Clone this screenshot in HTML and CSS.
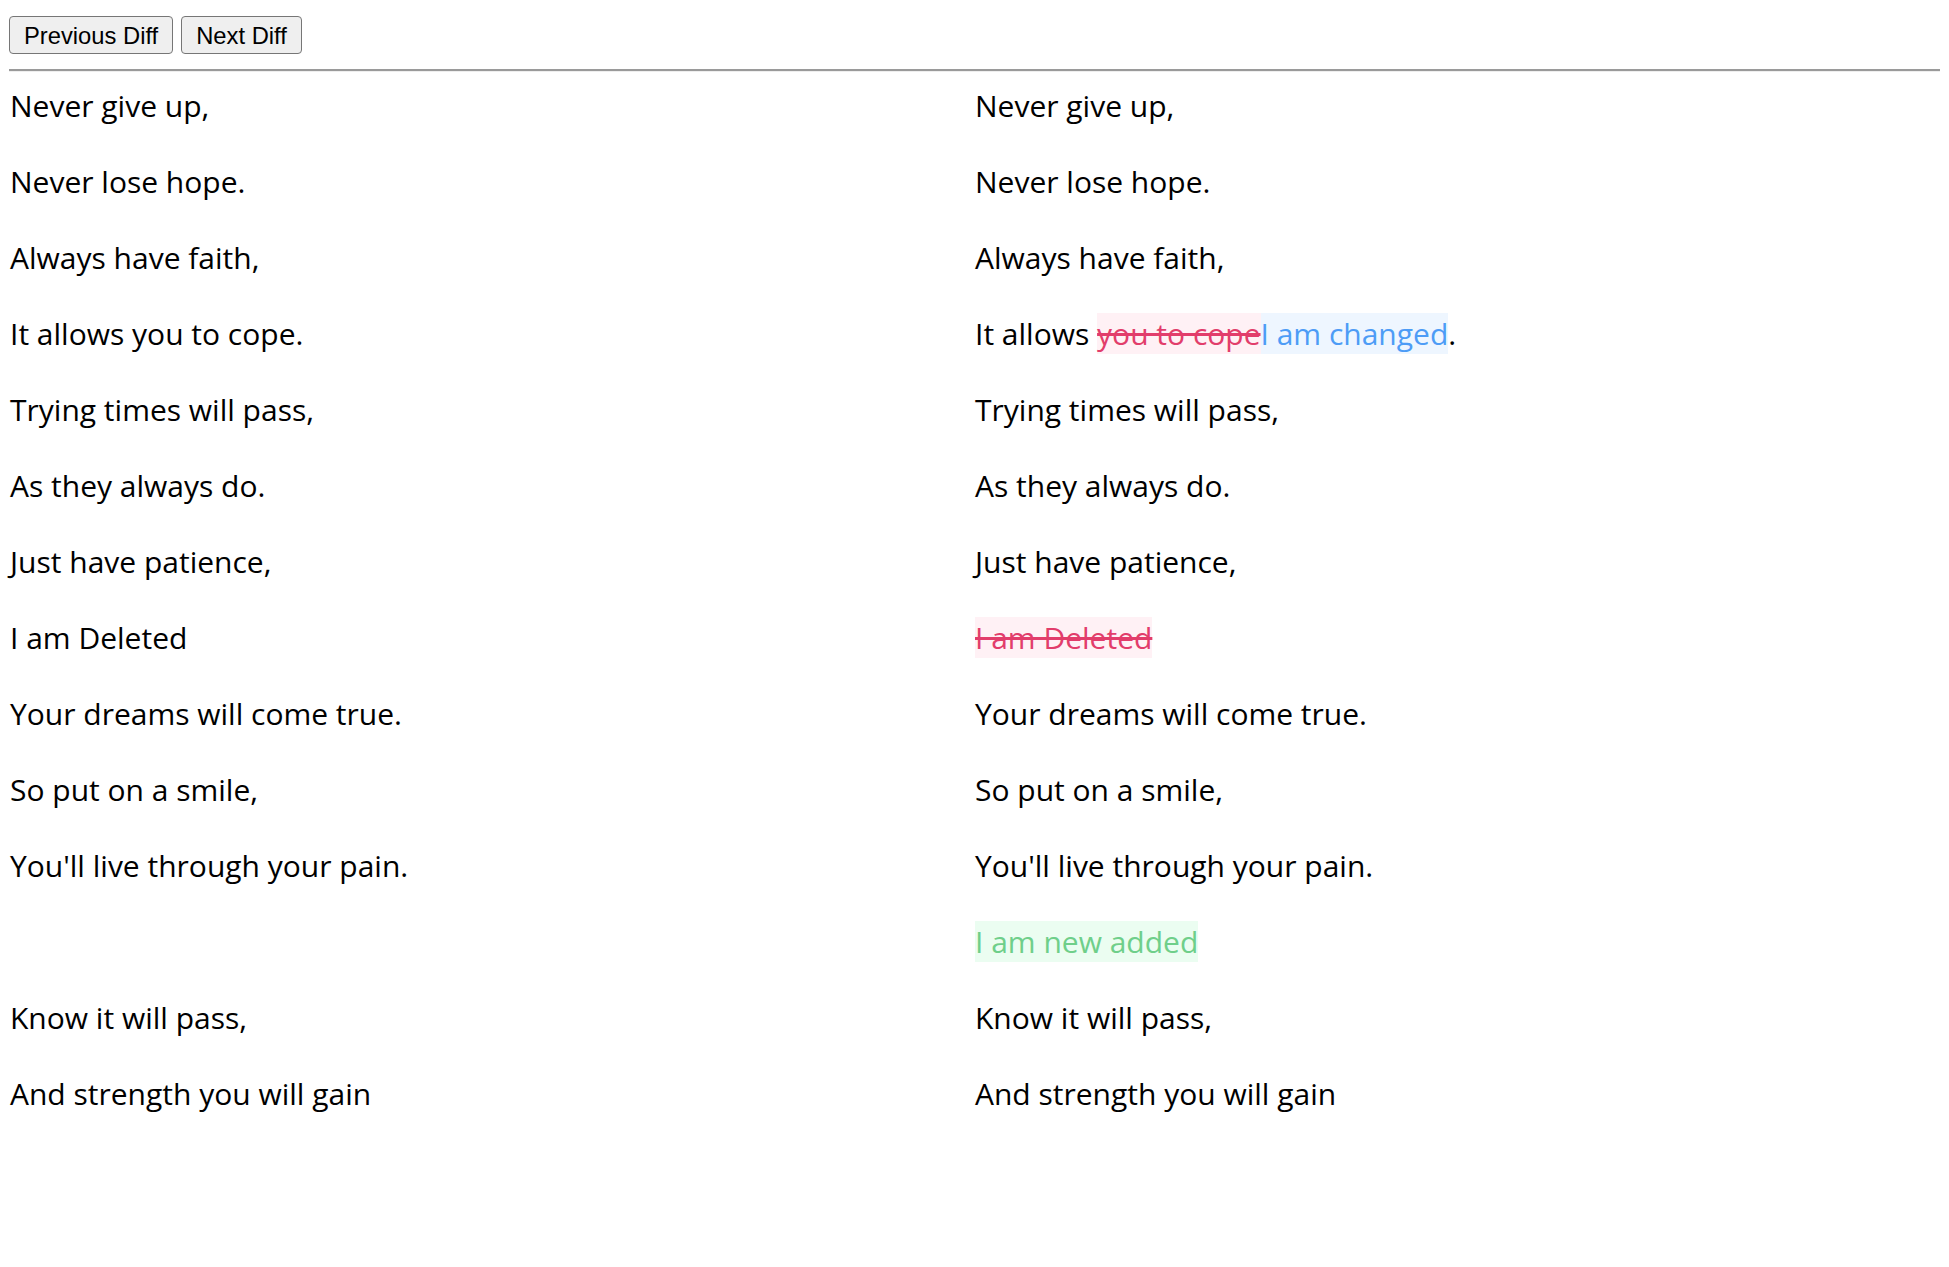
FILE: index.html
```html
<!DOCTYPE html>
<html>
<head>
<meta charset="utf-8">
<link rel="stylesheet" href="styles.css">
</head>
<body>
<div class="toolbar">
  <button class="btn">Previous Diff</button>
  <button class="btn">Next Diff</button>
</div>
<hr class="rule">
<div class="diff">
  <div class="line">Never give up,</div>
  <div class="line">Never give up,</div>
  <div class="line">Never lose hope.</div>
  <div class="line">Never lose hope.</div>
  <div class="line">Always have faith,</div>
  <div class="line">Always have faith,</div>
  <div class="line">It allows you to cope.</div>
  <div class="line">It allows <span class="del">you to cope</span><span class="chg">I am changed</span>.</div>
  <div class="line">Trying times will pass,</div>
  <div class="line">Trying times will pass,</div>
  <div class="line">As they always do.</div>
  <div class="line">As they always do.</div>
  <div class="line">Just have patience,</div>
  <div class="line">Just have patience,</div>
  <div class="line">I am Deleted</div>
  <div class="line"><span class="del">I am Deleted</span></div>
  <div class="line">Your dreams will come true.</div>
  <div class="line">Your dreams will come true.</div>
  <div class="line">So put on a smile,</div>
  <div class="line">So put on a smile,</div>
  <div class="line">You'll live through your pain.</div>
  <div class="line">You'll live through your pain.</div>
  <div class="line"></div>
  <div class="line"><span class="add">I am new added</span></div>
  <div class="line">Know it will pass,</div>
  <div class="line">Know it will pass,</div>
  <div class="line">And strength you will gain</div>
  <div class="line">And strength you will gain</div>
</div>
</body>
</html>
```

FILE: styles.css
```css
html, body {
  margin: 0;
  background: #ffffff;
}
body {
  padding: 16px 9px 0 9px;
  font-family: "Open Sans", "Noto Sans", sans-serif;
  color: #000;
}
.toolbar {
  display: flex;
  gap: 8px;
}
.btn {
  font-family: "Liberation Sans", Arial, sans-serif;
  font-size: 23.75px;
  line-height: 27px;
  height: 38px;
  padding: 0 14px;
  background: #efefef;
  color: #000;
  border: 1px solid #767676;
  border-radius: 4px;
  margin: 0;
}
.rule {
  margin: 15px 0 0 0;
  border: 0;
  border-top: 2px solid #9a9a9a;
  border-bottom: 1px solid #eeeeee;
  height: 0;
}
.diff {
  display: grid;
  grid-template-columns: 1fr 1fr;
  row-gap: 36px;
  padding: 13.5px 0 0 1px;
}
.line {
  font-size: 30px;
  line-height: 40px;
  height: 40px;
  white-space: nowrap;
}
.del {
  color: #e23d6b;
  background: #fff1f5;
  text-decoration: line-through;
  text-decoration-color: #e23d6b;
}
.chg {
  color: #4d9cf6;
  background: #eef6ff;
}
.add {
  color: #6fcf8a;
  background: #ebfdf1;
}
```
